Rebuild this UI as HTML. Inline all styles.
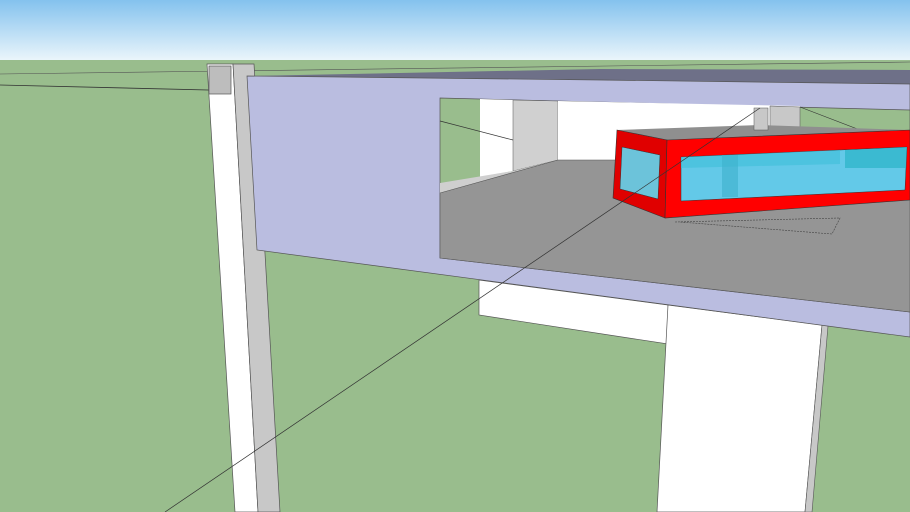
<!DOCTYPE html>
<html><head><style>html,body{margin:0;padding:0;overflow:hidden}svg{display:block}</style></head>
<body>
<svg width="910" height="512" viewBox="0 0 910 512" xmlns="http://www.w3.org/2000/svg">
<defs><linearGradient id="sky" x1="0" y1="0" x2="0" y2="1"><stop offset="0" stop-color="#84c2ee"/><stop offset="1" stop-color="#eaf5fb"/></linearGradient></defs>
<rect width="910" height="60" fill="url(#sky)"/>
<rect y="60" width="910" height="452" fill="#99bd8d"/>
<line x1="0" y1="74" x2="910" y2="62" stroke="#555" stroke-width="0.6"/>
<line x1="0" y1="85" x2="250" y2="91" stroke="#333" stroke-width="0.8"/>
<polygon points="207,64 233,64 258,512 235,512" fill="#fff" stroke="#555" stroke-width="0.7"/>
<polygon points="233,64 254,64 280,512 258,512" fill="#c8c8c8" stroke="#555" stroke-width="0.7"/>
<rect x="209" y="66" width="22" height="28" fill="#bdbdbd" stroke="#555" stroke-width="0.7"/>
<polygon points="479,280 668,305 668,344 479,315" fill="#fff" stroke="#555" stroke-width="0.7"/>
<polygon points="668,305 822,325 805,512 657,512" fill="#fff" stroke="#555" stroke-width="0.7"/>
<polygon points="822,325 828,326 812,512 805,512" fill="#c8c8c8" stroke="#555" stroke-width="0.6"/>
<polygon points="247,76 600,69 910,70 910,84 600,80" fill="#6e7088"/>
<polygon points="247,76 600,80 910,84 910,337 257,250" fill="#babde0" stroke="#555" stroke-width="0.7"/>
<polygon points="440,98 910,110 910,312 440,258" fill="#99bd8d" stroke="#555" stroke-width="0.7"/>
<polygon points="480,99 513,100 513,171 480,177" fill="#fff"/>
<polygon points="513,100 558,101 558,160 513,171" fill="#d0d0d0" stroke="#555" stroke-width="0.5"/>
<polygon points="558,101 800,106 800,160 558,160" fill="#fff"/>
<polygon points="770,106 800,107 800,132 770,132" fill="#c8c8c8" stroke="#555" stroke-width="0.5"/>
<line x1="440" y1="121" x2="513" y2="140" stroke="#333" stroke-width="0.7"/>
<polygon points="440,183 513,171 558,160 558,164 440,193" fill="#cfcfcf"/>
<polygon points="440,193 558,160 800,160 910,170 910,312 440,258" fill="#959595" stroke="#555" stroke-width="0.6"/>
<line x1="800" y1="107" x2="860" y2="130" stroke="#333" stroke-width="0.6"/>
<polyline points="675,222 840,218 832,234 680,222" fill="none" stroke="#444" stroke-width="0.6" stroke-dasharray="2,1"/>
<polygon points="617,130 760,125 910,130 910,134 667,140" fill="#8f8f8f"/>
<polygon points="617,130 667,140 665,218 613,198" fill="#e00000" stroke="#333" stroke-width="0.6"/>
<polygon points="667,140 910,130 910,200 665,218" fill="#ff0000" stroke="#333" stroke-width="0.6"/>
<polygon points="622,147 660,155 658,199 620,189" fill="#6cc3da" stroke="#333" stroke-width="0.5"/>
<polygon points="681,157 907,147 905,190 681,201" fill="#63c9e8" stroke="#333" stroke-width="0.5"/>
<polygon points="681,157 840,150 840,164 681,168" fill="#3fbfd8" opacity="0.6"/>
<polygon points="845,150 907,147 906,168 845,168" fill="#2bb3c8" opacity="0.7"/>
<rect x="722" y="155" width="16" height="42" fill="#3db0cc" opacity="0.6"/>
<rect x="754" y="108" width="14" height="22" fill="#c8c8c8" stroke="#555" stroke-width="0.5"/>
<line x1="165" y1="512" x2="760" y2="108" stroke="#333" stroke-width="0.7"/>
</svg>
</body></html>
